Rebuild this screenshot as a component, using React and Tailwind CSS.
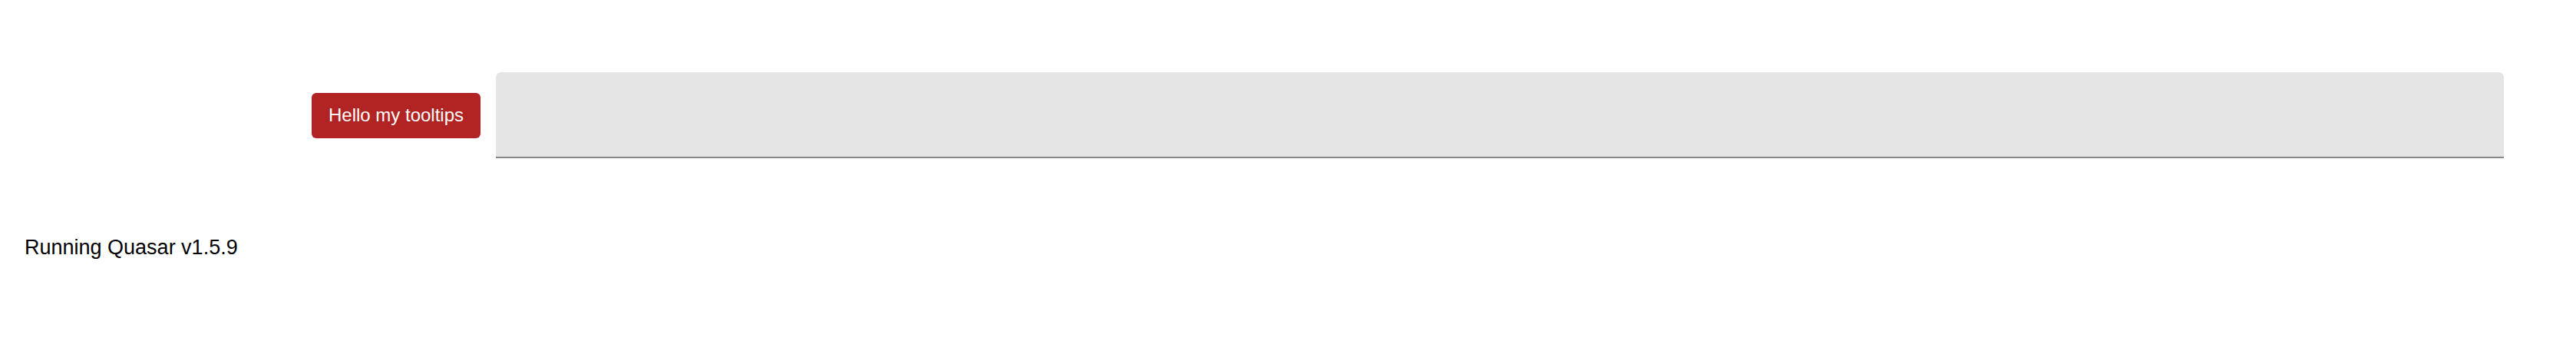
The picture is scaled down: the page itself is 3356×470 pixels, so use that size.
export default function App() {
  return (
    <div className="min-h-[470px] bg-white font-['Liberation_Sans',Arial,sans-serif] text-black">
      {/* Button + filled field row */}
      <div className="flex items-center gap-[20px] pl-[406px] pr-[94px] pt-[94px]">
        <button className="flex h-[59px] w-[220px] shrink-0 items-center justify-center rounded-[6px] bg-[#b22323] text-[24px] text-white">
          Hello my tooltips
        </button>
        <div className="h-[112px] flex-1 rounded-t-[7px] border-b-2 border-[#888888] bg-[#e5e5e5]" />
      </div>

      <p className="mt-[101px] pl-[32px] text-[27px] leading-[31px]">Running Quasar v1.5.9</p>
    </div>
  )
}
